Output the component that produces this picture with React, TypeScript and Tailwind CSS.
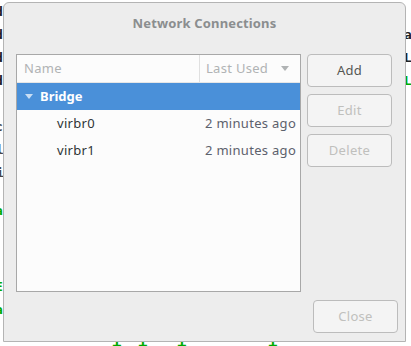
import React from 'react'

const rows = [
  { name: 'virbr0', used: '2 minutes ago' },
  { name: 'virbr1', used: '2 minutes ago' },
]

// bits of the terminal window sticking out behind the dialog
const behind = [
  { t: 'd', x: -5, y: 4, c: 'text-[#222]' },
  { t: 'd', x: -5, y: 27, c: 'text-[#222]' },
  { t: 'd', x: -5, y: 50, c: 'text-[#222]' },
  { t: 'd', x: -5, y: 73, c: 'text-[#222]' },
  { t: 'c', x: -5, y: 119, c: 'text-[#444]' },
  { t: 'l', x: -4, y: 142, c: 'text-[#444]' },
  { t: 'i', x: -4, y: 165, c: 'text-[#444]' },
  { t: 'a', x: -5, y: 203, c: 'text-[#0a0]' },
  { t: 'E', x: -5, y: 279, c: 'text-[#0a0]' },
  { t: 'a', x: -5, y: 302, c: 'text-[#0a0]' },
  { t: 'a', x: 404, y: 27, c: 'text-[#222]' },
  { t: 'L', x: 404, y: 50, c: 'text-[#222]' },
  { t: 'L', x: 404, y: 73, c: 'text-[#0a0]' },
  { t: '┻', x: 113, y: 338, c: 'text-[#0a0]' },
  { t: '┻', x: 139, y: 338, c: 'text-[#0a0]' },
  { t: '┻', x: 178, y: 338, c: 'text-[#0a0]' },
  { t: '┻', x: 269, y: 338, c: 'text-[#0a0]' },
]

const Button: React.FC<{ label: string; disabled?: boolean; className?: string }> = ({ label, disabled, className }) => (
  <div
    className={`h-[33px] rounded-[4px] border border-[#bcbcbc] bg-[#f4f4f4] flex items-center justify-center text-[13px] tracking-[0.3px] ${disabled ? 'text-[#c0c0bd]' : 'text-[#555753]'} ${className ?? ''}`}
  >
    {label}
  </div>
)

export default function App() {
  return (
    <div className="relative w-[411px] h-[346px] bg-white overflow-hidden" style={{ fontFamily: '"Noto Sans", "Open Sans", sans-serif' }}>
      {behind.map((b, i) => (
        <span
          key={i}
          className={`absolute font-bold text-[13px] leading-4 ${b.c}`}
          style={{ left: b.x, top: b.y, fontFamily: '"DejaVu Sans Mono", monospace' }}
        >
          {b.t}
        </span>
      ))}

      <div className="absolute left-[3px] top-[2px] w-[403px] h-[340px] border border-[#b4b4b4] rounded-t-[6px] bg-[#ededed] flex flex-col">
        <div className="h-[51px] pt-[12px] text-center text-[13px] leading-4 font-bold text-[#8b8e8f] tracking-[0.15px]">
          Network Connections
        </div>

        <div className="flex pl-[12px] gap-[6px]">
          <div className="w-[285px] h-[238px] border border-[#a8a8a8] bg-[#fcfcfc] flex flex-col">
            <div className="h-[28px] flex items-center border-b border-[#e6e6e6] text-[13px] text-[#b0b3b4] tracking-[0.3px]">
              <div className="w-[183px] h-full flex items-center pl-[7px] border-r border-[#e0e0e0]">Name</div>
              <div className="flex-1 flex items-center pl-[6px] pr-[11px]">
                <span className="flex-1">Last Used</span>
                <svg width="8" height="5" viewBox="0 0 8 5">
                  <path d="M0 0 H8 L4 5 Z" fill="#b0b3b4" />
                </svg>
              </div>
            </div>
            <div className="h-[27px] bg-[#4a90d9] flex items-center pl-[8px] text-white text-[13px] font-bold">
              <svg width="8" height="5" viewBox="0 0 8 5" className="mr-[7px]">
                <path d="M0 0 H8 L4 5 Z" fill="#c9def4" />
              </svg>
              Bridge
            </div>
            {rows.map((r) => (
              <div key={r.name} className="h-[27px] flex items-center text-[13px] tracking-[0.3px]">
                <div className="w-[183px] pl-[40px] text-[#2e3436]">{r.name}</div>
                <div className="flex-1 pl-[5px] text-[#5c616c] whitespace-nowrap">{r.used}</div>
              </div>
            ))}
          </div>

          <div className="w-[85px] flex flex-col gap-[7px]">
            <Button label="Add" />
            <Button label="Edit" disabled />
            <Button label="Delete" disabled />
          </div>
        </div>

        <div className="flex justify-end pr-[7px] pt-[8px]">
          <Button label="Close" disabled className="w-[85px] text-[#a9aaa8]" />
        </div>
      </div>
    </div>
  )
}
